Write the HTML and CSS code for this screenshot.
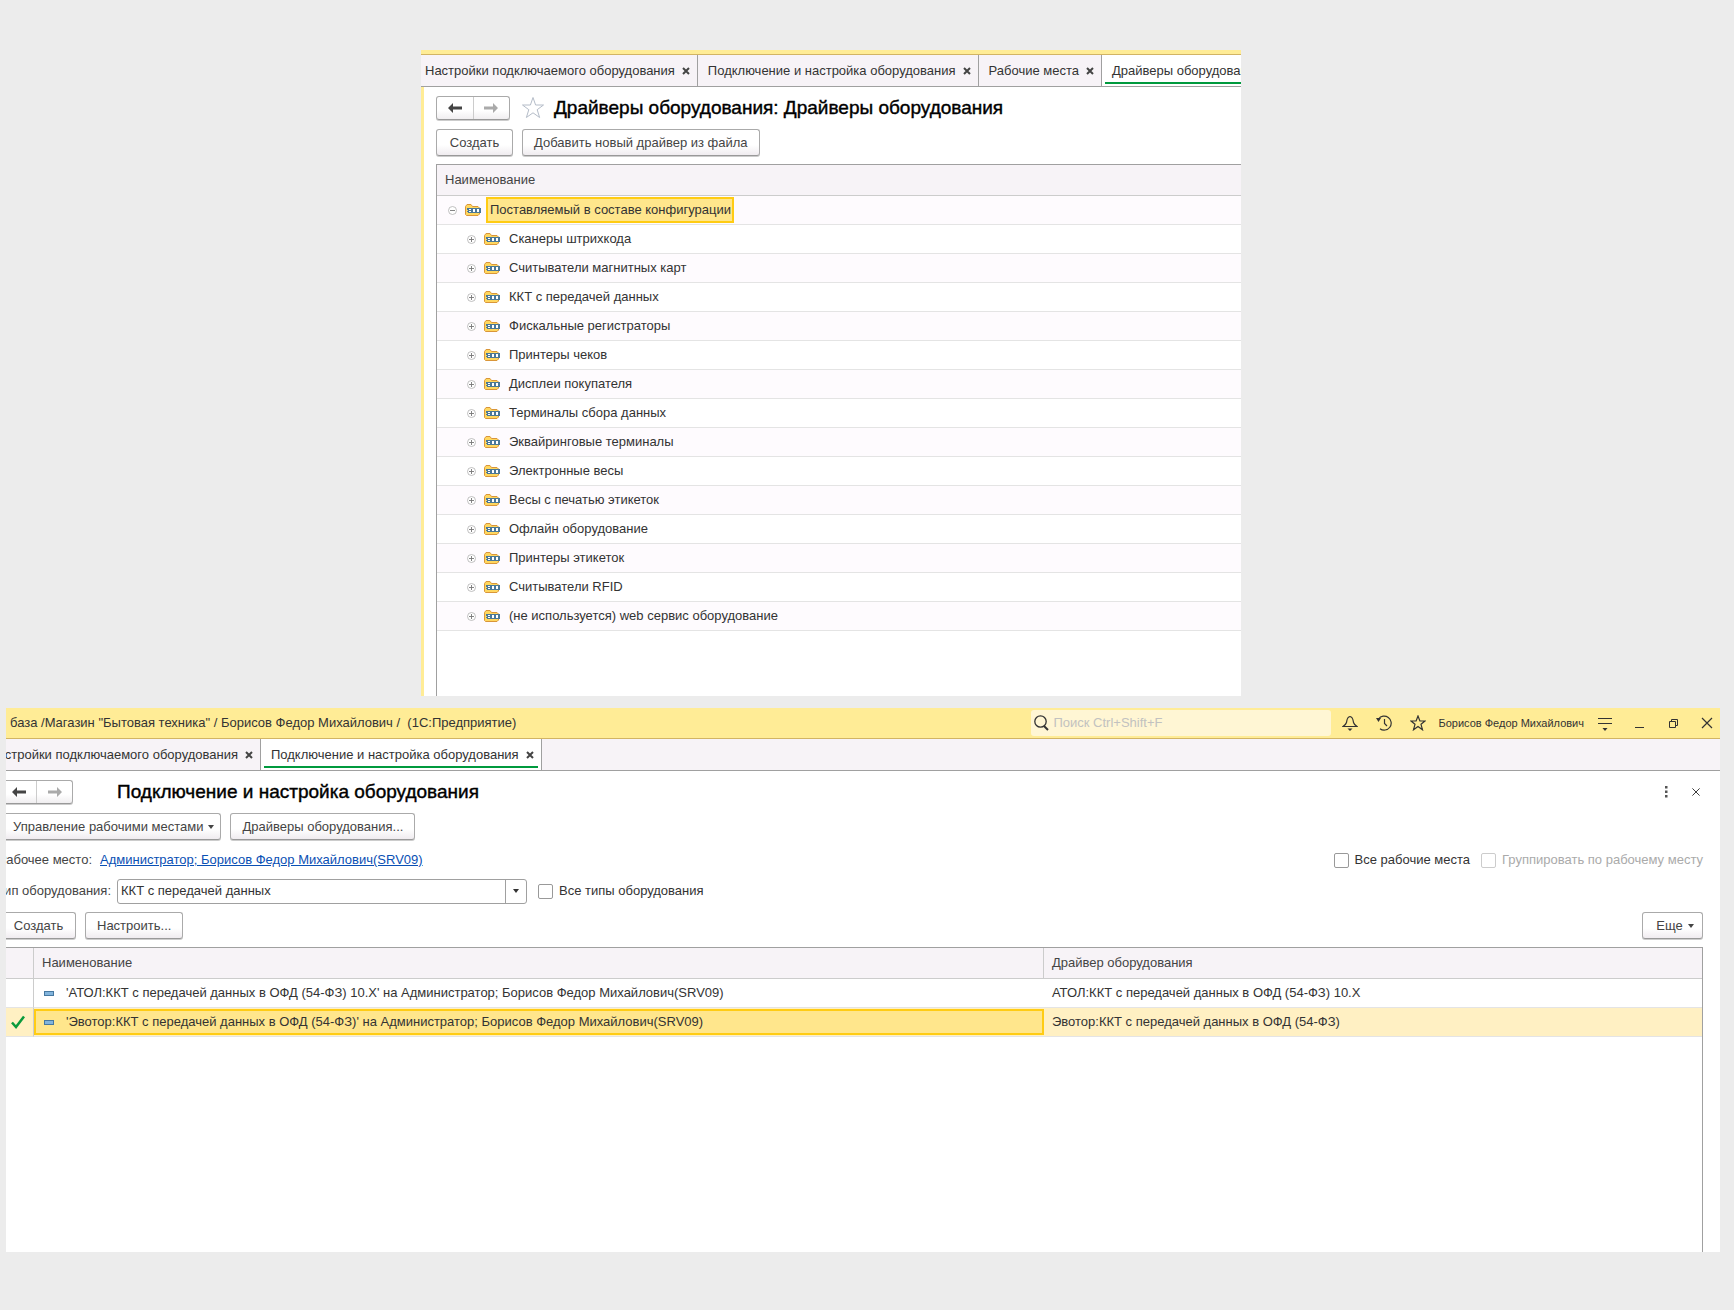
FILE: index.html
```html
<!DOCTYPE html>
<html lang="ru">
<head>
<meta charset="utf-8">
<title>Подключаемое оборудование</title>
<link rel="stylesheet" href="styles.css">
</head>
<body>
<svg class="sprite" aria-hidden="true">
  <symbol id="back" viewBox="0 0 14 10"><path d="M0 5 5 0V3.500H14V6.500H5V10Z"/></symbol>
  <symbol id="forward" viewBox="0 0 14 10"><path d="M14 5 9 0V3.500H0V6.500H9V10Z"/></symbol>
  <symbol id="cross" viewBox="0 0 8 8"><path d="M1 1 7 7M7 1 1 7" fill="none" stroke="currentColor" stroke-width="2"/></symbol>
  <symbol id="thin-cross" viewBox="0 0 10 10"><path d="M.5.5 9.500 9.500M9.500.5.5 9.500" fill="none" stroke="currentColor" stroke-width="1.200"/></symbol>
  <symbol id="star" viewBox="0 0 24 24"><path d="M12 1.500 14.600 9H22.500L16.200 13.700 18.600 21.500 12 16.800 5.400 21.500 7.800 13.700 1.500 9H9.400Z" fill="none" stroke="currentColor"/></symbol>
  <symbol id="plus" viewBox="0 0 9 9"><circle cx="4.500" cy="4.500" r="4" fill="#fff" stroke="#b0b0b0" stroke-width=".8"/><path d="M2 4.500H7M4.500 2V7" stroke="#777" stroke-width=".9"/></symbol>
  <symbol id="minus" viewBox="0 0 9 9"><circle cx="4.500" cy="4.500" r="4" fill="#fff" stroke="#b0b0b0" stroke-width=".8"/><path d="M2 4.500H7" stroke="#777" stroke-width=".9"/></symbol>
  <symbol id="folder" viewBox="0 0 16 12"><path d="M.5 10.500V2.500L2 .5H6L7.500 2.500H13L14.500 4V10L13 11.500H1.500Z" fill="#ffd75e" stroke="#d9963a"/><path d="M2 4H16V9H3V8H2V7H3V6H2Z" fill="#4a7898"/><path d="M4 5H6V6H4ZM4 7H6V8H4ZM8 5H10V8H8ZM12 5H14V8H12Z" fill="#fff"/></symbol>
  <symbol id="caret" viewBox="0 0 6 4"><path d="M0 0H6L3 4Z"/></symbol>
</svg>

<main class="page">
  <section class="window drivers">
    <nav class="tabs">
      <div class="tab tab-first"><a href="#settings">Настройки подключаемого оборудования</a><button class="tab-close" aria-label="Закрыть"><svg><use href="#cross"/></svg></button></div>
      <div class="tab"><a href="#connect">Подключение и настройка оборудования</a><button class="tab-close" aria-label="Закрыть"><svg><use href="#cross"/></svg></button></div>
      <div class="tab"><a href="#places">Рабочие места</a><button class="tab-close" aria-label="Закрыть"><svg><use href="#cross"/></svg></button></div>
      <div class="tab active"><a href="#drivers">Драйверы оборудования</a><button class="tab-close" aria-label="Закрыть"><svg><use href="#cross"/></svg></button></div>
    </nav>
    <div class="drivers-body">
      <header class="heading">
        <div class="history"><button aria-label="Назад"><svg><use href="#back"/></svg></button><button aria-label="Вперед" disabled><svg><use href="#forward"/></svg></button></div>
        <svg class="favorite"><use href="#star"/></svg>
        <h1>Драйверы оборудования: Драйверы оборудования</h1>
      </header>
      <div class="toolbar">
        <button class="btn create">Создать</button>
        <button class="btn">Добавить новый драйвер из файла</button>
      </div>
      <div class="tree-frame">
        <table class="tree">
          <thead><tr><th>Наименование</th></tr></thead>
          <tbody>
            <tr class="root"><td><div class="node"><svg class="toggle"><use href="#minus"/></svg><svg class="folder"><use href="#folder"/></svg><span class="selected">Поставляемый в составе конфигурации</span></div></td></tr>
            <tr><td><div class="node"><svg class="toggle"><use href="#plus"/></svg><svg class="folder"><use href="#folder"/></svg><span>Сканеры штрихкода</span></div></td></tr>
            <tr><td><div class="node"><svg class="toggle"><use href="#plus"/></svg><svg class="folder"><use href="#folder"/></svg><span>Считыватели магнитных карт</span></div></td></tr>
            <tr><td><div class="node"><svg class="toggle"><use href="#plus"/></svg><svg class="folder"><use href="#folder"/></svg><span>ККТ с передачей данных</span></div></td></tr>
            <tr><td><div class="node"><svg class="toggle"><use href="#plus"/></svg><svg class="folder"><use href="#folder"/></svg><span>Фискальные регистраторы</span></div></td></tr>
            <tr><td><div class="node"><svg class="toggle"><use href="#plus"/></svg><svg class="folder"><use href="#folder"/></svg><span>Принтеры чеков</span></div></td></tr>
            <tr><td><div class="node"><svg class="toggle"><use href="#plus"/></svg><svg class="folder"><use href="#folder"/></svg><span>Дисплеи покупателя</span></div></td></tr>
            <tr><td><div class="node"><svg class="toggle"><use href="#plus"/></svg><svg class="folder"><use href="#folder"/></svg><span>Терминалы сбора данных</span></div></td></tr>
            <tr><td><div class="node"><svg class="toggle"><use href="#plus"/></svg><svg class="folder"><use href="#folder"/></svg><span>Эквайринговые терминалы</span></div></td></tr>
            <tr><td><div class="node"><svg class="toggle"><use href="#plus"/></svg><svg class="folder"><use href="#folder"/></svg><span>Электронные весы</span></div></td></tr>
            <tr><td><div class="node"><svg class="toggle"><use href="#plus"/></svg><svg class="folder"><use href="#folder"/></svg><span>Весы с печатью этикеток</span></div></td></tr>
            <tr><td><div class="node"><svg class="toggle"><use href="#plus"/></svg><svg class="folder"><use href="#folder"/></svg><span>Офлайн оборудование</span></div></td></tr>
            <tr><td><div class="node"><svg class="toggle"><use href="#plus"/></svg><svg class="folder"><use href="#folder"/></svg><span>Принтеры этикеток</span></div></td></tr>
            <tr><td><div class="node"><svg class="toggle"><use href="#plus"/></svg><svg class="folder"><use href="#folder"/></svg><span>Считыватели RFID</span></div></td></tr>
            <tr><td><div class="node"><svg class="toggle"><use href="#plus"/></svg><svg class="folder"><use href="#folder"/></svg><span>(не используется) web сервис оборудование</span></div></td></tr>
          </tbody>
        </table>
      </div>
    </div>
  </section>

  <section class="window connect">
    <header class="titlebar">
      <span class="app-title">база /Магазин "Бытовая техника" / Борисов Федор Михайлович /&nbsp; (1С:Предприятие)</span>
      <label class="search"><svg viewBox="0 0 16 16"><circle cx="7.500" cy="6.500" r="5.700" fill="none" stroke="#333" stroke-width="1.300"/><path d="M11 11 15 15" stroke="#333" stroke-width="2"/></svg><input type="search" placeholder="Поиск Ctrl+Shift+F" aria-label="Поиск"></label>
      <div class="system">
        <button aria-label="Уведомления"><svg viewBox="0 0 16 16"><path d="M8 1.500C5 2 5 5 4.500 7.500 4 9.500 2.500 10.500 1 11.500H15C13.500 10.500 12 9.500 11.500 7.500 11 5 11 2 8 1.500Z" fill="none" stroke="#333" stroke-width="1.200"/><path d="M5.500 13.500H10.500L8 16Z" fill="#333"/></svg></button>
        <button aria-label="История"><svg viewBox="0 0 16 16"><path d="M2.500 4A7 7 0 1 1 4 13.700M8.500 4V8.500L11 11" fill="none" stroke="#333" stroke-width="1.200"/><path d="M0 3H5L2.500 7Z" fill="#333"/></svg></button>
        <button aria-label="Избранное"><svg viewBox="0 0 16 16"><path d="M8 1 9.900 6H15L11 9.300 12.500 14.800 8 11.600 3.500 14.800 5 9.300 1 6H6.100Z" fill="none" stroke="#333" stroke-width="1.200"/></svg></button>
      </div>
      <span class="user">Борисов Федор Михайлович</span>
      <div class="controls">
        <button aria-label="Меню"><svg viewBox="0 0 16 16"><path d="M1 3.500H15M1 8.500H15" stroke="#333"/><path d="M5.500 13H10.500L8 16Z" fill="#333"/></svg></button>
        <button aria-label="Свернуть"><svg viewBox="0 0 16 16"><path d="M4 12.500H13" stroke="#333"/></svg></button>
        <button aria-label="Восстановить"><svg viewBox="0 0 16 16"><path d="M4.500 6.500H10.500V12.500H4.500ZM6.500 6V4.500H12.500V10.500H11" fill="none" stroke="#333"/></svg></button>
        <button aria-label="Закрыть"><svg viewBox="0 0 16 16"><path d="M3 3 13 13M13 3 3 13" stroke="#333" stroke-width="1.200"/></svg></button>
      </div>
    </header>
    <nav class="tabs">
      <div class="tab tab-cut"><a href="#settings">Настройки подключаемого оборудования</a><button class="tab-close" aria-label="Закрыть"><svg><use href="#cross"/></svg></button></div>
      <div class="tab active"><a href="#connect">Подключение и настройка оборудования</a><button class="tab-close" aria-label="Закрыть"><svg><use href="#cross"/></svg></button></div>
    </nav>
    <div class="connect-body">
      <header class="heading">
        <div class="history"><button aria-label="Назад"><svg><use href="#back"/></svg></button><button aria-label="Вперед" disabled><svg><use href="#forward"/></svg></button></div>
        <h1>Подключение и настройка оборудования</h1>
        <div class="form-actions">
          <button aria-label="Действия"><svg viewBox="0 0 10 12"><path d="M4 0H6.500V2.500H4ZM4 4.500H6.500V7H4ZM4 9H6.500V11.500H4Z" fill="#555"/></svg></button>
          <button aria-label="Закрыть форму"><svg class="close-form"><use href="#thin-cross"/></svg></button>
        </div>
      </header>
      <div class="toolbar">
        <button class="btn cut">Управление рабочими местами<svg class="caret"><use href="#caret"/></svg></button>
        <button class="btn">Драйверы оборудования...</button>
      </div>
      <div class="place">
        <span class="field-label">Рабочее место:</span>
        <a class="place-link" href="#place">Администратор; Борисов Федор Михайлович(SRV09)</a>
        <div class="flags">
          <label class="check"><input type="checkbox">Все рабочие места</label>
          <label class="check off"><input type="checkbox" disabled>Группировать по рабочему месту</label>
        </div>
      </div>
      <div class="kind">
        <label class="field-label" for="kind">Тип оборудования:</label>
        <div class="combo"><select id="kind"><option>ККТ с передачей данных</option></select><span class="drop"><svg class="caret"><use href="#caret"/></svg></span></div>
        <label class="check"><input type="checkbox">Все типы оборудования</label>
      </div>
      <div class="toolbar commands">
        <button class="btn cut create">Создать</button>
        <button class="btn">Настроить...</button>
        <button class="btn more">Еще<svg class="caret"><use href="#caret"/></svg></button>
      </div>
      <div class="grid-frame">
        <table class="grid">
          <colgroup><col class="col-mark"><col class="col-name"><col class="col-driver"></colgroup>
          <thead><tr><th></th><th>Наименование</th><th>Драйвер оборудования</th></tr></thead>
          <tbody>
            <tr><td></td><td><div class="device"><i class="dash"></i>'АТОЛ:ККТ с передачей данных в ОФД (54-ФЗ) 10.Х' на Администратор; Борисов Федор Михайлович(SRV09)</div></td><td>АТОЛ:ККТ с передачей данных в ОФД (54-ФЗ) 10.Х</td></tr>
            <tr class="current"><td><svg class="tick" viewBox="0 0 14 14"><path d="M1 7.500 5 12 13 1.500" fill="none" stroke="#0a9a3c" stroke-width="2.500"/></svg></td><td><div class="device"><i class="dash"></i>'Эвотор:ККТ с передачей данных в ОФД (54-ФЗ)' на Администратор; Борисов Федор Михайлович(SRV09)</div></td><td>Эвотор:ККТ с передачей данных в ОФД (54-ФЗ)</td></tr>
          </tbody>
        </table>
      </div>
    </div>
  </section>
</main>
</body>
</html>
```
FILE: styles.css
```css
* { box-sizing: border-box; }

body {
  margin: 0;
  min-height: 100vh;
  background: #ececec;
  color: #333;
  font: 13px/16px "Liberation Sans", Arial, sans-serif;
}

button, input, select { font: inherit; color: inherit; }
button { padding: 0; border: 0; background: none; }
svg { display: block; flex: none; fill: currentColor; }
.sprite { position: absolute; width: 0; height: 0; }

.page {
  display: flex;
  flex-direction: column;
  gap: 12px;
  padding: 50px 14px 58px 6px;
}

.window { overflow: hidden; background: #fff; }

/* Tabs */
.tabs {
  display: flex;
  height: 32px;
  background: #f7f3f7;
  border-bottom: 1px solid #a0a0a0;
}
.tab {
  display: flex;
  flex: none;
  align-items: center;
  gap: 7px;
  padding: 0 7px 0 10px;
  border-right: 1px solid #a0a0a0;
}
.tab a { color: #333; text-decoration: none; white-space: nowrap; }
.tab-close svg { width: 8px; height: 8px; color: #444; }
.tab-first { padding-left: 4px; }
.tab.active {
  position: relative;
  background: #fff;
}
.tab.active::after {
  content: "";
  position: absolute;
  right: 3px;
  bottom: 2px;
  left: 3px;
  height: 2px;
  background: #009a3e;
}

/* Headings and buttons */
.heading { display: flex; align-items: center; height: 25px; }
h1 { margin: 0; color: #000; font-size: 19px; font-weight: 400; line-height: 24px; white-space: nowrap; -webkit-text-stroke: 0.4px #000; }

.history {
  display: flex;
  width: 74px;
  height: 24px;
  border: 1px solid #aaa;
  border-bottom-color: #999;
  border-radius: 3px;
  background: linear-gradient(#fff 60%, #f0eef0);
  box-shadow: 0 1px 0 #ccc;
}
.history button { display: grid; flex: 1; place-items: center; color: #444; }
.history button + button { border-left: 1px solid #ccc; color: #aaa; }
.history svg { width: 14px; height: 10px; }
.favorite { width: 24px; height: 24px; color: #b4bcc8; }

.toolbar { display: flex; gap: 9px; margin-top: 9px; }
.btn {
  display: flex;
  align-items: center;
  justify-content: center;
  gap: 5px;
  height: 27px;
  padding: 0 11px;
  border: 1px solid #aaa;
  border-bottom-color: #999;
  border-radius: 3px;
  background: linear-gradient(#fff 60%, #f0ecf0);
  box-shadow: 0 1px 0 #ccc;
  color: #444;
  white-space: nowrap;
}
.create { min-width: 77px; }
.caret { width: 6px; height: 4px; }

/* Driver tree window */
.drivers {
  display: flex;
  flex-direction: column;
  width: calc(50% - 37px);
  min-height: 646px;
  margin-left: 415px;
  border-top: 4px solid #ffec96;
}
.drivers .tabs { height: 33px; border-top: 1px solid #d2b464; }
.drivers-body {
  display: flex;
  flex: 1;
  flex-direction: column;
  padding: 8px 0 0 12px;
  border-left: 3px solid #ffec96;
}
.drivers .favorite { margin: 0 9px 0 11px; }
.tree-frame { flex: 1; margin-top: 8px; border-top: 1px solid #a0a0a0; border-left: 1px solid #a0a0a0; }

table { width: 100%; border-collapse: separate; border-spacing: 0; }
th {
  height: 31px;
  padding: 0 8px;
  border-bottom: 1px solid #ccc;
  background: #f7f3f7;
  color: #444;
  font-weight: 400;
  text-align: left;
}
td { height: 29px; padding: 0 8px; border-bottom: 1px solid #e4e4e4; white-space: nowrap; }
.tree tbody tr:nth-child(odd) { background: #fefbfe; }
.tree td { padding: 0 0 0 30px; }
.tree .root td { padding-left: 11px; }
.node { display: flex; align-items: center; }
.toggle { width: 9px; height: 9px; margin-right: 8px; }
.folder { width: 16px; height: 12px; margin-right: 9px; }
.root .folder { margin-right: 5px; }
.selected { padding: 3px 1px 3px 2px; border: 2px solid #ffcc14; background: #ffe68c; }

/* Equipment window */
.connect { min-height: 544px; }
.titlebar {
  display: flex;
  align-items: center;
  height: 31px;
  padding: 0 4px;
  border-bottom: 1px solid #d2b464;
  background: #ffec96;
}
.app-title { flex: 1; white-space: nowrap; }
.search {
  display: flex;
  align-items: center;
  gap: 2px;
  width: 300px;
  height: 26px;
  padding-left: 2px;
  border-radius: 3px;
  background: #fff6d4;
}
.search svg { width: 16px; height: 16px; }
.search input { flex: 1; min-width: 0; padding: 0 2px; border: 0; outline: 0; background: none; }
.search input::placeholder { color: #c2c2c0; opacity: 1; }
.system { display: flex; gap: 18px; margin: 0 12px 0 11px; }
.controls { display: flex; gap: 18px; margin: 0 1px 0 13px; }
.titlebar button svg { width: 16px; height: 16px; }
.user { font-size: 11px; white-space: nowrap; }

.tab-cut { width: 255px; justify-content: flex-end; padding-left: 0; }

.connect-body { padding: 8px 17px 0 0; }
.connect .history { width: 67px; border-left: 0; border-radius: 0 3px 3px 0; }
.connect .history button:first-child { flex: 0 0 30px; padding-right: 5px; }
.connect h1 { margin-left: 44px; }
.form-actions { display: flex; align-items: center; gap: 21px; margin-left: auto; padding-right: 3px; }
.form-actions svg { width: 10px; height: 12px; }
.form-actions .close-form { width: 8px; height: 8px; }
.btn.cut { padding-left: 7px; border-left: 0; border-radius: 0 3px 3px 0; }
.cut.create { min-width: 70px; }
.connect .btn .caret { margin-right: -5px; }

.place { display: flex; align-items: center; height: 22px; margin-top: 9px; }
.kind { display: flex; align-items: center; height: 26px; margin-top: 7px; }
.field-label { display: flex; flex: none; justify-content: flex-end; color: #444; white-space: nowrap; }
.place .field-label { width: 86px; }
.kind .field-label { width: 105px; }
.place-link { margin-left: 8px; color: #0a50b4; white-space: nowrap; }
.flags { display: flex; gap: 11px; margin-left: auto; }
.check { display: flex; align-items: center; gap: 6px; white-space: nowrap; }
.check input { width: 15px; height: 15px; margin: 0; border: 1px solid #999; border-radius: 2px; background: #fff; appearance: none; }
.check.off { color: #aaa; }
.check.off input { border-color: #ccc; }
.combo {
  display: flex;
  width: 410px;
  height: 25px;
  margin: 0 11px 0 6px;
  border: 1px solid #a0a0a0;
  border-radius: 3px;
}
.combo select { flex: 1; padding: 0 3px; border: 0; outline: 0; background: none; appearance: none; }
.drop { display: grid; width: 21px; place-items: center; border-left: 1px solid #a0a0a0; }
.commands { margin-top: 8px; }
.more { min-width: 61px; margin-left: auto; }

.grid-frame { min-height: 305px; margin-top: 8px; border-top: 1px solid #a0a0a0; border-right: 1px solid #a0a0a0; }
.grid { table-layout: fixed; }
.col-mark { width: 28px; }
.col-driver { width: 38.8%; }
.grid th:not(:last-child), .grid td:first-child { border-right: 1px solid #ccc; }
.grid td:first-child { padding: 0 5px; }
.device { display: flex; align-items: center; gap: 12px; height: 28px; padding-left: 2px; }
.grid td:nth-child(2) { padding: 0 8px; }
.dash { width: 10px; height: 5px; border: 1px solid #4678a0; background: #82b4dc; }
.tick { width: 14px; height: 14px; }
.current td { background: #fff0c3; }
.current td:nth-child(2) { padding: 0; }
.current .device { height: 26px; padding-left: 8px; border: 2px solid #ffcc14; background: #ffe68c; }
```
